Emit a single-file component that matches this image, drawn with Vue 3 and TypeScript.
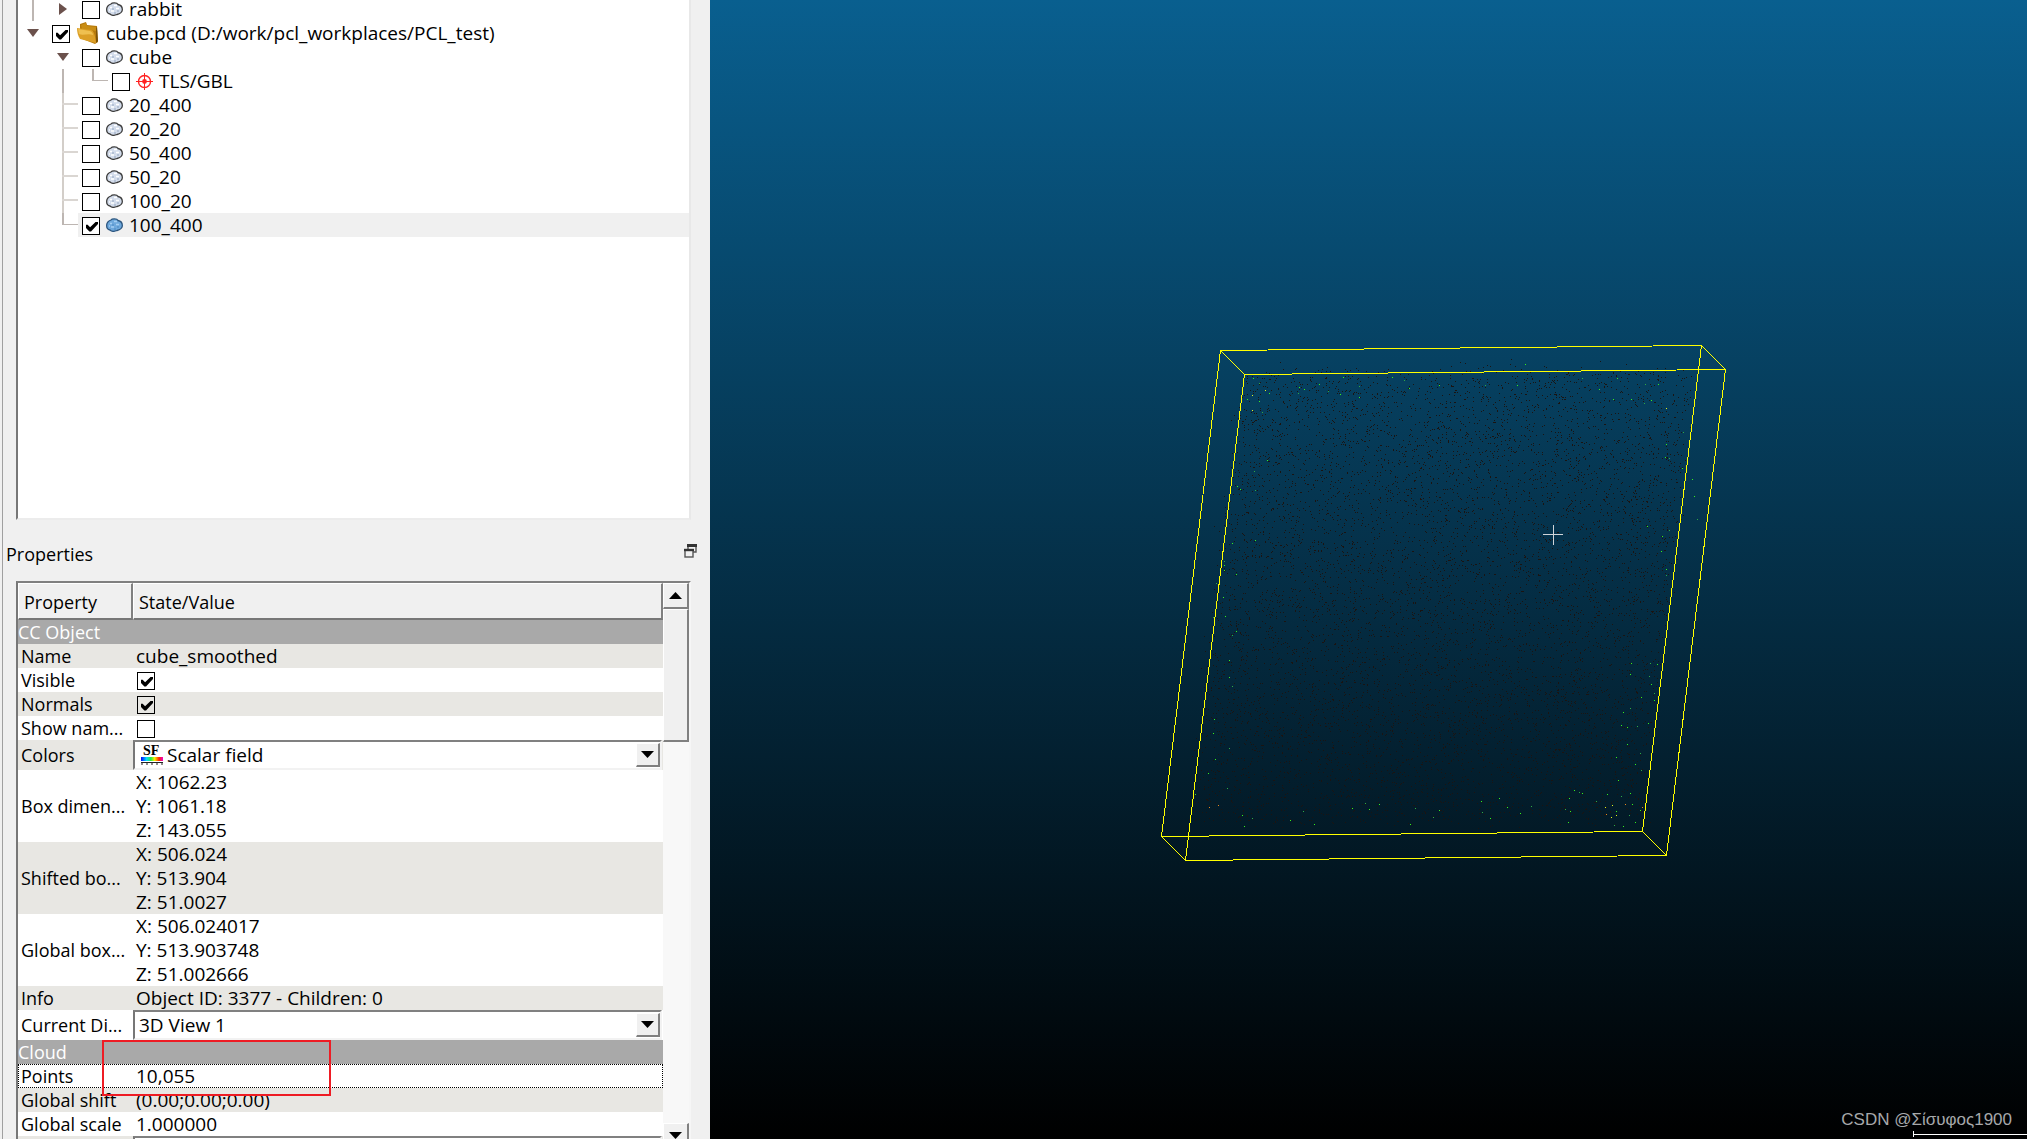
<script setup lang="ts">
import { ref } from 'vue'

type Guide = 'blank' | 'stem' | 'tee' | 'end' | 'elbow' | 'tail' | 'open' | 'closed'
type Icon = 'cloud' | 'cloud-on' | 'folder' | 'target'

interface TreeRow {
  name: string
  guides: Guide[]
  icon: Icon
  checked: boolean
  selected?: boolean
}

interface Property {
  kind: 'section' | 'text' | 'check' | 'select'
  label: string
  lines?: string[]
  checked?: boolean
  options?: string[]
  scalar?: boolean
  shaded?: boolean
  current?: boolean
}

const tree = ref<TreeRow[]>([
  { name: 'rabbit', guides: ['tail', 'closed'], icon: 'cloud', checked: false },
  { name: 'cube.pcd (D:/work/pcl_workplaces/PCL_test)', guides: ['open'], icon: 'folder', checked: true },
  { name: 'cube', guides: ['blank', 'open'], icon: 'cloud', checked: false },
  { name: 'TLS/GBL', guides: ['blank', 'stem', 'elbow'], icon: 'target', checked: false },
  { name: '20_400', guides: ['blank', 'tee'], icon: 'cloud', checked: false },
  { name: '20_20', guides: ['blank', 'tee'], icon: 'cloud', checked: false },
  { name: '50_400', guides: ['blank', 'tee'], icon: 'cloud', checked: false },
  { name: '50_20', guides: ['blank', 'tee'], icon: 'cloud', checked: false },
  { name: '100_20', guides: ['blank', 'tee'], icon: 'cloud', checked: false },
  { name: '100_400', guides: ['blank', 'end'], icon: 'cloud-on', checked: true, selected: true },
])

const properties = ref<Property[]>([
  { kind: 'section', label: 'CC Object' },
  { kind: 'text', label: 'Name', lines: ['cube_smoothed'], shaded: true },
  { kind: 'check', label: 'Visible', checked: true },
  { kind: 'check', label: 'Normals', checked: true, shaded: true },
  { kind: 'check', label: 'Show nam...', checked: false },
  { kind: 'select', label: 'Colors', options: ['Scalar field'], scalar: true, shaded: true },
  { kind: 'text', label: 'Box dimen...', lines: ['X: 1062.23', 'Y: 1061.18', 'Z: 143.055'] },
  { kind: 'text', label: 'Shifted bo...', lines: ['X: 506.024', 'Y: 513.904', 'Z: 51.0027'], shaded: true },
  { kind: 'text', label: 'Global box...', lines: ['X: 506.024017', 'Y: 513.903748', 'Z: 51.002666'] },
  { kind: 'text', label: 'Info', lines: ['Object ID: 3377 - Children: 0'], shaded: true },
  { kind: 'select', label: 'Current Di...', options: ['3D View 1'] },
  { kind: 'section', label: 'Cloud' },
  { kind: 'text', label: 'Points', lines: ['10,055'], current: true },
  { kind: 'text', label: 'Global shift', lines: ['(0.00;0.00;0.00)'], shaded: true },
  { kind: 'text', label: 'Global scale', lines: ['1.000000'] },
  { kind: 'select', label: '', options: [''], shaded: true },
])

// Seeded generator, so the cloud is the same on every load.
let seed = 3377
function random(): number {
  seed = (seed * 1664525 + 1013904223) % 4294967296
  return seed / 4294967296
}
function spread(): number {
  return random() + random() + random() - 1.5
}
function dot(x: number, y: number): string {
  return `M${x} ${y}h1v1h-1z`
}

const darkPoints = Array.from({ length: 8400 }, () => {
  const u = random()
  const v = random()
  const x = 535 - 52 * v + 447 * u + spread() * 12
  const y = 372 + 450 * v - 4 * u + spread() * 10
  return dot(Math.round(x), Math.round(y))
}).join('')

const greens: number[][] = [
  [543, 378], [549, 383], [559, 393], [549, 401], [552, 412], [537, 399], [589, 387], [588, 393], [594, 389],
  [609, 384], [618, 391], [630, 394], [633, 377], [649, 386], [649, 397], [682, 377], [694, 380], [699, 388],
  [729, 385], [775, 385], [807, 385], [815, 364], [872, 378], [889, 389], [907, 378], [935, 384], [948, 384],
  [941, 400], [934, 403], [921, 399], [903, 399], [973, 432], [956, 444], [955, 457], [959, 458], [972, 468],
  [984, 496], [987, 519], [982, 479], [937, 526], [959, 530], [951, 551], [956, 569], [956, 575], [952, 536],
  [557, 460], [544, 471], [527, 486], [530, 489], [545, 490], [522, 543], [545, 540], [514, 561], [514, 565],
  [514, 570], [506, 583], [526, 574], [513, 597], [503, 617], [515, 616], [526, 631], [522, 635], [519, 660],
  [519, 677], [522, 686], [504, 719], [503, 733], [519, 748], [505, 759], [498, 773], [517, 788], [485, 794],
  [532, 815], [542, 818], [534, 826], [580, 820], [593, 811], [604, 824], [642, 808], [655, 803], [659, 809],
  [669, 804], [705, 808], [700, 824], [729, 810], [723, 817], [771, 801], [789, 798], [772, 812], [780, 818],
  [810, 813], [821, 806], [797, 807], [921, 663], [940, 663], [947, 664], [920, 674], [939, 676], [941, 684],
  [931, 697], [944, 693], [944, 700], [913, 712], [920, 708], [917, 727], [911, 725], [927, 726], [938, 723],
  [917, 744], [930, 753], [906, 757], [925, 764], [931, 770], [908, 780], [864, 790], [869, 792], [872, 793],
  [897, 794], [911, 796], [920, 793], [859, 798], [886, 801], [906, 811], [922, 804], [919, 815], [930, 810],
  [925, 822], [904, 825], [913, 826], [860, 811], [855, 809], [858, 822],
]
const brightGreen = greens.filter((_, i) => i % 3 !== 1).map(([x, y]) => dot(x, y)).join('')
const dullGreen = greens.filter((_, i) => i % 3 === 1).map(([x, y]) => dot(x, y)).join('')
const yellowPoints = [[555, 390], [542, 395], [542, 410], [956, 408], [895, 807], [902, 805], [901, 817], [906, 815]]
  .map(([x, y]) => dot(x, y)).join('')
const orangePoints = [[915, 804], [896, 814], [932, 807], [508, 805], [499, 807]]
  .map(([x, y]) => dot(x, y)).join('')
</script>

<template>
  <div class="app">
    <aside class="side">
      <ul class="tree">
        <li v-for="row in tree" :key="row.name" class="node">
          <span v-for="(g, i) in row.guides" :key="i" class="guide" :class="g"></span>
          <label class="entry" :class="{ selected: row.selected }">
            <input v-model="row.checked" type="checkbox" class="tick" />
            <svg v-if="row.icon === 'folder'" class="folder" viewBox="0 0 24 22" aria-hidden="true">
              <path d="M4 2 10 0 11 3 21 4 22 20 19 22 4 16Z" fill="#b67a0c" />
              <path d="M5 3 10 1 11 4 20 5 20 9 6 7Z" fill="#c98d14" />
              <path d="M1 6 15 8C18 9 19 13 20 21L4 17C2 14 1 10 1 6Z" fill="#dc9f26" />
              <path d="M2 7 14 9C16 10 17 11 17 13 12 11 7 14 3 12Z" fill="#efc050" />
              <path d="M20 21 22 19 21 5 20 6Z" fill="#7c5208" />
            </svg>
            <svg v-else-if="row.icon === 'target'" class="glyph target" viewBox="0 0 17 17" aria-hidden="true">
              <circle cx="8.5" cy="8.5" r="6" fill="none" stroke="#f22" stroke-width="1.4" />
              <circle cx="8.5" cy="8.5" r="2.4" fill="#f22" />
              <path d="M8.5 0V17M0 8.5H17" stroke="#f22" stroke-width="1" />
            </svg>
            <svg v-else class="glyph" viewBox="0 0 17 14" aria-hidden="true">
              <path
                d="M5 2C6 0.500 11 0.500 12 2.500C15 3 16.500 5 16.300 8C16 11 13 12 11 12.500C8 13.800 5 13 4 12C1.500 11.500 0.500 10 0.700 7.500C0.500 4.500 2.500 3 5 2Z"
                :fill="row.icon === 'cloud' ? '#d3dceb' : '#6ea8dc'"
                :stroke="row.icon === 'cloud' ? '#3c3c3c' : '#2c567f'"
                stroke-width="1.3"
              />
              <path
                d="M4 5.500H6M8 3.500H11M10 6.500H13M5 9H8M3 8H4"
                :stroke="row.icon === 'cloud' ? '#fff' : '#a4cdf2'"
                stroke-width="1.600"
              />
              <path
                d="M6 7H8M11 9H13M8 11H10"
                :stroke="row.icon === 'cloud' ? '#94a6bd' : '#4a88c2'"
                stroke-width="1"
              />
            </svg>
            <span>{{ row.name }}</span>
          </label>
        </li>
      </ul>

      <header class="dock-title">
        <h2>Properties</h2>
        <button type="button" class="float" aria-label="Float panel">
          <svg viewBox="0 0 13 14" aria-hidden="true">
            <path d="M4 1H12V8H9M4 1V5" fill="none" stroke="#555" stroke-width="1.400" />
            <path d="M3 1.500H13" stroke="#333" stroke-width="3" />
            <rect x="1" y="6" width="8" height="7" fill="#f0f0f0" stroke="#555" stroke-width="1.400" />
            <path d="M0 6H10" stroke="#333" stroke-width="2.400" />
          </svg>
        </button>
      </header>

      <section class="panel">
        <div class="sheet">
          <table class="props">
            <colgroup>
              <col class="col-name" />
              <col />
            </colgroup>
            <thead>
              <tr>
                <th scope="col">Property</th>
                <th scope="col">State/Value</th>
              </tr>
            </thead>
            <tbody>
              <tr
                v-for="(p, i) in properties"
                :key="i"
                :class="{ section: p.kind === 'section', shaded: p.shaded, current: p.current }"
              >
                <th v-if="p.kind === 'section'" colspan="2" scope="colgroup">{{ p.label }}</th>
                <template v-else>
                  <th scope="row">
                    <label v-if="p.kind !== 'text'" :for="'prop-' + i">{{ p.label }}</label>
                    <template v-else>{{ p.label }}</template>
                    <span v-if="p.current" class="marker"></span>
                  </th>
                  <td v-if="p.kind === 'text'">
                    <div v-for="line in p.lines" :key="line">{{ line }}</div>
                  </td>
                  <td v-else-if="p.kind === 'check'">
                    <input :id="'prop-' + i" v-model="p.checked" type="checkbox" class="tick" />
                  </td>
                  <td v-else class="combo-cell">
                    <div class="combo" :class="{ scalar: p.scalar }">
                      <svg v-if="p.scalar" class="sf" viewBox="0 0 22 22" aria-hidden="true">
                        <defs>
                          <linearGradient id="ramp">
                            <stop offset="0" stop-color="#00f" />
                            <stop offset="0.25" stop-color="#0df" />
                            <stop offset="0.45" stop-color="#2e4" />
                            <stop offset="0.62" stop-color="#fe0" />
                            <stop offset="0.82" stop-color="#f20" />
                            <stop offset="1" stop-color="#e0c" />
                          </linearGradient>
                        </defs>
                        <text x="2" y="12" class="sf-text">SF</text>
                        <rect x="0" y="14" width="22" height="4" fill="url(#ramp)" />
                        <path d="M0 19.500H22M1 20V22M6 20V22M11 20V22M16 20V22M21 20V22" stroke="#222" />
                      </svg>
                      <select :id="'prop-' + i" :aria-label="p.label || 'Active scalar field'">
                        <option v-for="o in p.options" :key="o">{{ o }}</option>
                      </select>
                      <span class="drop"></span>
                    </div>
                  </td>
                </template>
              </tr>
            </tbody>
          </table>
        </div>
        <div class="scroll">
          <button type="button" class="step up" aria-label="Scroll up"></button>
          <div class="thumb"></div>
          <button type="button" class="step down" aria-label="Scroll down"></button>
        </div>
      </section>
    </aside>

    <main class="view">
      <svg class="scene" viewBox="0 0 1317 1139" shape-rendering="crispEdges" aria-label="3D view">
        <path :d="darkPoints" fill="#1a1412" />
        <path :d="brightGreen" fill="#35f01c" />
        <path :d="dullGreen" fill="#2fa845" />
        <path :d="yellowPoints" fill="#e2f01c" />
        <path :d="orangePoints" fill="#e8861a" />
        <path
          class="box"
          d="M510.500 350.500 991.500 345.500 932.500 831.500 451.500 836.500ZM534.500 374.500 1015.500 369.500 956.500 855.500 475.500 860.500ZM510.500 350.500 534.500 374.500M991.500 345.500 1015.500 369.500M932.500 831.500 956.500 855.500M451.500 836.500 475.500 860.500"
        />
        <path d="M833 534.500H853M843.500 525V545" stroke="#d0d4d8" fill="none" />
      </svg>
      <span class="scale"></span>
      <p class="credit">CSDN @Σίσυφος1900</p>
    </main>
  </div>
</template>

<style>
body {
  margin: 0;
}
</style>

<style scoped>
.app {
  display: grid;
  grid-template-columns: 710fr 1317fr;
  height: 100vh;
  overflow: hidden;
  background: #f0f0f0;
  color: #000;
  font: 18px/24px "Open Sans", "Noto Sans", sans-serif;
}
.side {
  display: flex;
  flex-direction: column;
  min-width: 0;
  min-height: 0;
  margin-left: 2px;
  border-left: 1px solid #a0a0a0;
  box-sizing: border-box;
}
.tree {
  flex: 0 0 520px;
  box-sizing: border-box;
  margin: 0 19px 0 13px;
  padding: 0;
  list-style: none;
  background: #fff;
  border: solid;
  border-width: 0 2px 2px;
  border-color: #e3e3e3 #e8e8e8 #ececec #777;
  font-size: 19px;
}
.node {
  display: flex;
  height: 24px;
}
.node:first-child {
  height: 21px;
}
.node:first-child .entry {
  height: 18px;
  line-height: 18px;
}
.guide {
  position: relative;
  flex: 0 0 30px;
}
.guide::before,
.guide::after {
  position: absolute;
  left: 14px;
  background: #bdb6b2;
}
.stem::before,
.tee::before {
  content: "";
  top: 0;
  bottom: 0;
  width: 2px;
}
.tail::before {
  content: "";
  top: 0;
  bottom: 0;
  width: 2px;
}
.tee::before {
  background: #d3cec9;
}
.tee::after {
  content: "";
  top: 10px;
  width: 16px;
  height: 2px;
  background: #dad6d2;
}
.end::before,
.elbow::before {
  content: "";
  top: 0;
  width: 2px;
  height: 11px;
}
.end::after,
.elbow::after {
  content: "";
  top: 11px;
  width: 16px;
  height: 1px;
}
.open::before,
.closed::before {
  content: "";
  background: #6b514c;
}
.open::before {
  left: 9px;
  top: 8px;
  width: 12px;
  height: 8px;
  clip-path: polygon(0 0, 100% 0, 50% 100%);
}
.closed::before {
  left: 11px;
  top: 3px;
  width: 8px;
  height: 12px;
  clip-path: polygon(0 0, 100% 50%, 0 100%);
}
.entry {
  display: flex;
  flex: 1;
  align-items: center;
  gap: 6px;
  padding-left: 4px;
  white-space: nowrap;
}
.selected {
  background: #f0f0f0;
}
.tick {
  position: relative;
  display: block;
  flex: none;
  appearance: none;
  box-sizing: border-box;
  width: 18px;
  height: 18px;
  margin: 1px 0 0;
  border: 1px solid #000;
  background: #fff;
}
.tick:checked::before {
  content: "";
  position: absolute;
  left: 3px;
  top: 4px;
  width: 12px;
  height: 10px;
  background: #000;
  clip-path: polygon(0 32%, 14% 32%, 34% 58%, 84% 0, 100% 0, 100% 24%, 42% 100%, 28% 100%, 0 66%);
}
.folder {
  width: 24px;
  height: 22px;
}
.glyph {
  width: 17px;
  height: 14px;
}
.target {
  height: 17px;
}
.dock-title {
  display: flex;
  flex: 0 0 61px;
  align-items: center;
  justify-content: space-between;
  padding: 0 13px 0 3px;
}
h2 {
  margin: 0;
  padding-top: 6px;
  font: inherit;
}
.float {
  width: 13px;
  height: 14px;
  padding: 0;
  border: 0;
  background: none;
}
.float svg {
  display: block;
}
.panel {
  display: flex;
  flex: 1;
  min-height: 0;
  box-sizing: border-box;
  margin: 0 19px -12px 13px;
  border: 2px solid;
  border-color: #808080 #f6f6f6 #f6f6f6 #777;
  overflow: hidden;
}
.sheet {
  flex: 1;
  min-width: 0;
  overflow: hidden;
  background: #fff;
}
.props {
  width: 100%;
  table-layout: fixed;
  border-collapse: separate;
  border-spacing: 0;
}
.col-name {
  width: 115px;
}
.props th,
.props td {
  padding: 0 3px;
  font-weight: 400;
  text-align: left;
  white-space: nowrap;
}
.props td {
  font-size: 19px;
}
.props thead th {
  height: 37px;
  box-sizing: border-box;
  padding: 2px 5px 0;
  background: #f0f0f0;
  border: solid;
  border-width: 1px 2px 2px 1px;
  border-color: #fff #808080 #777 #fff;
}
.props .section th {
  padding: 0;
  background: #a9a9a9;
  color: #fff;
}
.shaded {
  background: #e8e7e3;
}
.shaded .tick {
  background: #e8e7e3;
}
.props td .tick {
  margin-left: 1px;
}
.current {
  position: relative;
  outline: 1px dotted #000;
  outline-offset: -1px;
}
.marker {
  position: absolute;
  z-index: 1;
  top: -24px;
  left: 84px;
  width: 229px;
  height: 56px;
  box-sizing: border-box;
  border: 2px solid #ee1c24;
  pointer-events: none;
}
.props .combo-cell {
  height: 30px;
  padding: 0 1px 0 0;
}
.combo {
  display: flex;
  align-items: center;
  position: relative;
  box-sizing: border-box;
  height: 30px;
  background: #fff;
  border: solid;
  border-width: 2px;
  border-color: #808080 #f2f2f2 #f2f2f2 #777;
}
.combo select {
  flex: 1;
  height: 26px;
  padding: 0 4px;
  border: 0;
  appearance: none;
  background: transparent;
  color: inherit;
  font: inherit;
}
.sf {
  flex: none;
  width: 22px;
  height: 22px;
  margin: 0 0 2px 6px;
  overflow: visible;
}
.sf-text {
  font: bold 14px/14px "Liberation Serif", serif;
}
.drop,
.step,
.thumb {
  box-sizing: border-box;
  background: #f0f0f0;
  border: solid;
  border-width: 1px 2px 2px 1px;
  border-color: #fff #808080 #808080 #fff;
}
.drop {
  position: absolute;
  top: 1px;
  right: 0;
  width: 24px;
  height: 24px;
  pointer-events: none;
}
.drop::before,
.step::before {
  content: "";
  display: block;
  width: 13px;
  height: 7px;
  background: #000;
  clip-path: polygon(0 0, 100% 0, 50% 100%);
}
.drop::before {
  margin: 7px 4px;
}
.scroll {
  display: flex;
  flex: 0 0 26px;
  flex-direction: column;
  background: #f8f8f8;
}
.step {
  flex: 0 0 26px;
  padding: 0 5px;
  border-radius: 0;
}
.step.up::before {
  clip-path: polygon(50% 0, 100% 100%, 0 100%);
}
.thumb {
  flex: 0 0 133px;
}
.down {
  margin-top: auto;
}
.view {
  position: relative;
  min-width: 0;
  background: linear-gradient(#095f8f, #000);
}
.scene {
  display: block;
  width: 100%;
  height: 100%;
}
.box {
  fill: none;
  stroke: #ff0;
  stroke-width: 1;
}
.scale {
  position: absolute;
  right: 0;
  bottom: 2px;
  width: 114px;
  height: 6px;
  box-sizing: border-box;
  border-left: 1px solid #fff;
  background: linear-gradient(#fff, #fff) 0 3px / 100% 1px no-repeat;
}
.credit {
  position: absolute;
  right: 15px;
  bottom: 7px;
  margin: 0;
  color: #a6a8aa;
  font: 17px/24px "Liberation Sans", sans-serif;
}
</style>
